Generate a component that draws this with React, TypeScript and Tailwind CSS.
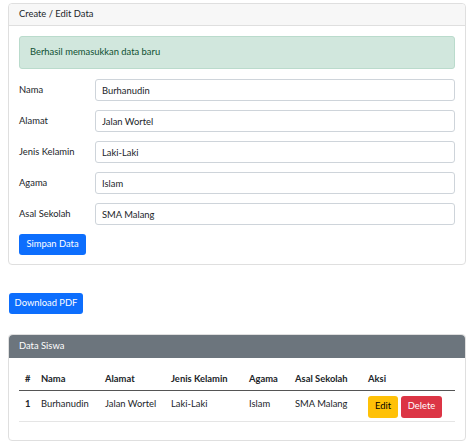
import React from "react";

const fields = [
  { label: "Nama", value: "Burhanudin" },
  { label: "Alamat", value: "Jalan Wortel" },
  { label: "Jenis Kelamin", value: "Laki-Laki" },
  { label: "Agama", value: "Islam" },
  { label: "Asal Sekolah", value: "SMA Malang" },
];

const siswa = [
  {
    id: 1,
    nama: "Burhanudin",
    alamat: "Jalan Wortel",
    jk: "Laki-Laki",
    agama: "Islam",
    sekolah: "SMA Malang",
  },
];

const App: React.FC = () => {
  return (
    <div
      className="min-h-screen bg-white px-[8px] pt-[3px] text-[9.4px] text-[#212529]"
      style={{ fontFamily: "Lato, 'Noto Sans', sans-serif" }}
    >
      {/* Form card */}
      <div className="rounded-[4px] border border-[#dfdfdf]">
        <div className="flex h-[22px] items-center rounded-t-[4px] border-b border-[#dfdfdf] bg-[#f7f7f7] px-[10px]">
          Create / Edit Data
        </div>
        <div className="p-[10px] pb-[9px]">
          <div className="mb-[10px] flex h-[33px] items-center rounded-[3px] border border-[#badbcc] bg-[#d1e7dd] px-[10px] text-[#0f5132]">
            Berhasil memasukkan data baru
          </div>
          <div className="flex flex-col gap-[9px]">
            {fields.map((f) => (
              <div key={f.label} className="flex items-center">
                <label className="w-[76px] shrink-0">{f.label}</label>
                <input
                  className="h-[22px] flex-1 rounded-[3px] border border-[#ced4da] px-[6px] text-[#212529] outline-none"
                  defaultValue={f.value}
                />
              </div>
            ))}
          </div>
          <button className="mt-[9px] h-[21px] w-[67px] rounded-[3px] bg-[#0d6efd] text-white">
            Simpan Data
          </button>
        </div>
      </div>

      <div className="mt-[28px] pl-[1px]">
        <button className="h-[21px] w-[74px] rounded-[3px] bg-[#0d6efd] text-white">
          Download PDF
        </button>
      </div>

      {/* Data table card */}
      <div className="mt-[20px] rounded-[4px] border border-[#dfdfdf]">
        <div className="flex h-[23px] items-center rounded-t-[4px] bg-[#6c757d] px-[10px] text-white">
          Data Siswa
        </div>
        <div className="p-[10px] pb-[18px]">
          <table className="w-full border-collapse whitespace-nowrap text-left">
            <thead>
              <tr className="h-[22px] border-b-[1.5px] border-[#555]">
                <th className="w-[16px] pl-[6px] font-bold">#</th>
                <th className="w-[64px] px-[6px] font-bold">Nama</th>
                <th className="w-[66px] px-[6px] font-bold">Alamat</th>
                <th className="w-[78px] px-[6px] font-bold">Jenis Kelamin</th>
                <th className="w-[46px] px-[6px] font-bold">Agama</th>
                <th className="w-[73px] px-[6px] font-bold">Asal Sekolah</th>
                <th className="px-[6px] font-bold">Aksi</th>
              </tr>
            </thead>
            <tbody>
              {siswa.map((s) => (
                <tr key={s.id} className="h-[31px] border-b border-[#e5e5e5]">
                  <td className="pb-[2px] pl-[6px] font-bold">{s.id}</td>
                  <td className="px-[6px] pb-[2px]">{s.nama}</td>
                  <td className="px-[6px] pb-[2px]">{s.alamat}</td>
                  <td className="px-[6px] pb-[2px]">{s.jk}</td>
                  <td className="px-[6px] pb-[2px]">{s.agama}</td>
                  <td className="px-[6px] pb-[2px]">{s.sekolah}</td>
                  <td className="px-[6px] pt-[2px]">
                    <div className="flex gap-[3px]">
                      <button className="h-[22px] w-[30px] rounded-[3px] bg-[#ffc107] text-black">
                        Edit
                      </button>
                      <button className="h-[22px] w-[41px] rounded-[3px] bg-[#dc3545] text-white">
                        Delete
                      </button>
                    </div>
                  </td>
                </tr>
              ))}
            </tbody>
          </table>
        </div>
      </div>
    </div>
  );
};

export default App;
